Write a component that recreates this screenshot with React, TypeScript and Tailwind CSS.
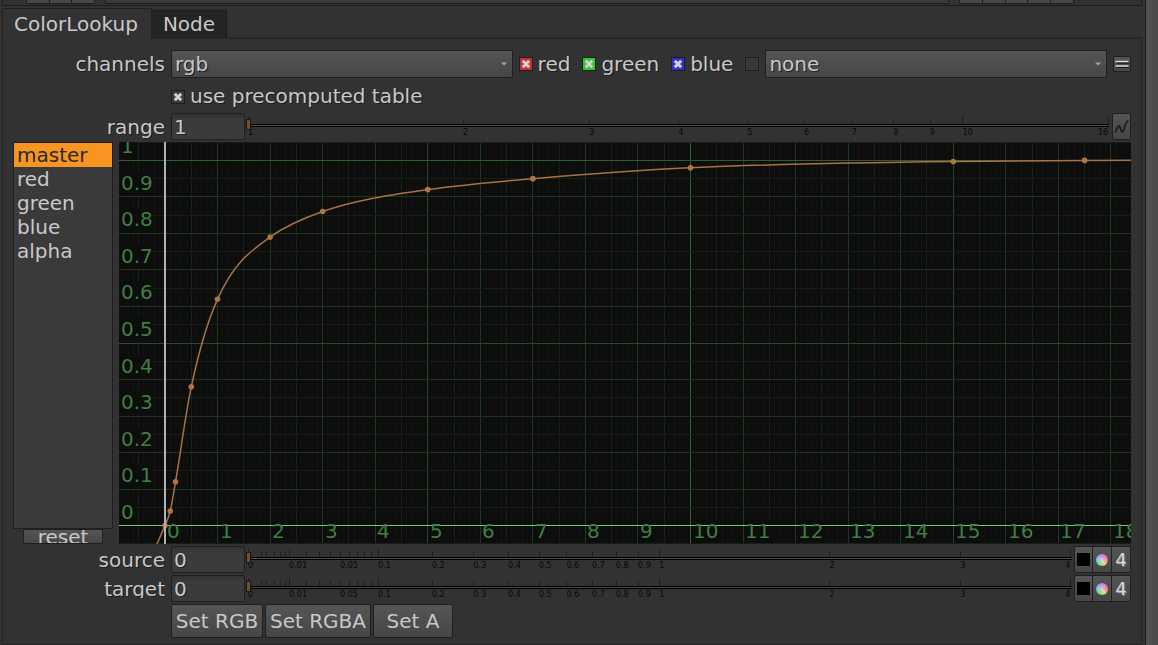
import { useState } from "react";
import type { ReactNode } from "react";

type Tick = { value: number; label?: string; tall?: boolean };

const CURVES = ["master", "red", "green", "blue", "alpha"];

const RANGE_TICKS: Tick[] = [
  { value: 1, label: "1", tall: true },
  { value: 2, label: "2" },
  { value: 3, label: "3" },
  { value: 4, label: "4" },
  { value: 5, label: "5" },
  { value: 6, label: "6" },
  { value: 7, label: "7" },
  { value: 8, label: "8" },
  { value: 9, label: "9" },
  { value: 10, label: "10", tall: true },
  { value: 16, label: "16", tall: true },
];

const COLOR_TICKS: Tick[] = [
  { value: 0, label: "0", tall: true },
  { value: 0.001 },
  { value: 0.002 },
  { value: 0.004 },
  { value: 0.006 },
  { value: 0.008 },
  { value: 0.01, label: "0.01", tall: true },
  { value: 0.02 },
  { value: 0.03 },
  { value: 0.04 },
  { value: 0.05, label: "0.05" },
  { value: 0.06 },
  { value: 0.07 },
  { value: 0.08 },
  { value: 0.09 },
  { value: 0.1, label: "0.1", tall: true },
  { value: 0.2, label: "0.2" },
  { value: 0.3, label: "0.3" },
  { value: 0.4, label: "0.4" },
  { value: 0.5, label: "0.5" },
  { value: 0.6, label: "0.6" },
  { value: 0.7, label: "0.7" },
  { value: 0.8, label: "0.8" },
  { value: 0.9, label: "0.9" },
  { value: 1, label: "1", tall: true },
  { value: 2, label: "2" },
  { value: 3, label: "3" },
  { value: 4, label: "4", tall: true },
];

const logScale = (v: number) => Math.log(v) / Math.log(16);
const sqrtScale = (v: number) => Math.sqrt(v / 4);

// x, y and tangent slope of every key on the master curve
const KEYS = [
  [0, 0, 0.33],
  [0.1, 0.04, 0.6],
  [0.2, 0.12, 0.83],
  [0.5, 0.38, 0.67],
  [1, 0.62, 0.32],
  [2, 0.79, 0.105],
  [3, 0.86, 0.05],
  [5, 0.92, 0.021],
  [7, 0.95, 0.0125],
  [10, 0.98, 0.0065],
  [15, 0.997, 0.0018],
  [17.5, 1, 0.0005],
];

// Graph space to pixels
const px = (x: number) => 46 + x * 52.55;
const py = (y: number) => 383.6 - y * 365.2;

function curvePath() {
  let d = `M${px(-0.2)} ${py(-0.066)} L${px(0)} ${py(0)}`;
  for (let i = 0; i < KEYS.length - 1; i++) {
    const [x0, y0, s0] = KEYS[i];
    const [x1, y1, s1] = KEYS[i + 1];
    const h = (x1 - x0) / 3;
    d += ` C${px(x0 + h)} ${py(y0 + s0 * h)} ${px(x1 - h)} ${py(y1 - s1 * h)} ${px(x1)} ${py(y1)}`;
  }
  return d + ` L${px(40)} ${py(1.004)}`;
}

function CurveEditor() {
  const cols = Array.from({ length: 420 }, (_, i) => i - 9);
  const rows = Array.from({ length: 23 }, (_, i) => i - 1);
  const yLabels = Array.from({ length: 11 }, (_, i) => i);
  const xLabels = Array.from({ length: 40 }, (_, i) => i);

  return (
    <svg className="block h-[402px] w-full min-w-0 bg-[#0d0d0d]" role="img" aria-label="curve">
      <g shapeRendering="crispEdges">
        {cols.map((i) => (
          <rect
            key={i}
            x={Math.floor(px(i / 10))}
            y={0}
            width={1}
            height={402}
            fill={
              i % 100 === 0
                ? "#2e6332"
                : i % 50 === 0
                  ? "#234727"
                  : i % 10 === 0
                    ? "#1d381f"
                    : i % 5 === 0
                      ? "#152317"
                      : "#0f120f"
            }
          />
        ))}
        {rows.map((i) => (
          <rect
            key={i}
            x={0}
            y={Math.floor(py(i / 20))}
            width="100%"
            height={1}
            fill={
              i % 20 === 0
                ? "#2d5c30"
                : i % 10 === 0
                  ? "#264d2a"
                  : i % 2 === 0
                    ? "#1d351f"
                    : "#141f15"
            }
          />
        ))}
      </g>

      {/* Labels knock out the fine grid behind them */}
      <g fontSize={20} fill="#3f7f40">
        {yLabels.map((i) => {
          const y = Math.round(py(i / 10));
          const text = i === 0 ? "0" : i === 10 ? "1" : `0.${i}`;
          return (
            <g key={i}>
              <rect x={1} y={y - 25} width={text.length > 1 ? 33 : 14} height={23} fill="#0d0d0d" />
              <text x={2} y={y - 7}>
                {text}
              </text>
            </g>
          );
        })}
        {xLabels.map((i) => (
          <rect
            key={i}
            x={px(i) + 2}
            y={377}
            width={i > 9 ? 26 : 13}
            height={24}
            fill="#0d0d0d"
          />
        ))}
        <rect
          x={0}
          y={383}
          width="100%"
          height={1}
          fill="#76c878"
          shapeRendering="crispEdges"
        />
        {xLabels.map((i) => (
          <text key={i} x={Math.round(px(i) + 2)} y={396}>
            {i}
          </text>
        ))}
      </g>

      <path d={curvePath()} fill="none" stroke="#a87344" strokeWidth={1.5} />
      {KEYS.map(([x, y]) => (
        <circle key={x} cx={px(x)} cy={py(y)} r={2.8} fill="#ae7543" />
      ))}
      <rect x={45} y={0} width={2} height={402} fill="#b2b2b2" />
    </svg>
  );
}

interface TickSliderProps {
  label: string;
  min: number;
  max: number;
  ticks: Tick[];
  scale: (v: number) => number;
}

function TickSlider({ label, min, max, ticks, scale }: TickSliderProps) {
  return (
    <div className="ml-px mr-0.5 grid h-[27px] min-w-0 flex-1 text-shadow-none">
      <div className="col-start-1 row-start-1 pl-0.5">
        <svg
          className="block h-[27px] w-full overflow-visible font-['DejaVu_Sans_Condensed','DejaVu_Sans',sans-serif] text-[9px]"
          aria-hidden="true"
        >
          <g shapeRendering="crispEdges">
            {ticks.map((t) => (
              <rect
                key={t.value}
                x={`${scale(t.value) * 99.8}%`}
                y={t.tall ? 3 : 6}
                width={1}
                height={t.tall ? 8 : 5}
                fill="#1e1e1e"
              />
            ))}
            <rect x={2} y={11} width="99.7%" height={1} fill="#000" />
            <rect x={2} y={12} width="99.7%" height={1} fill="#4b4b4b" />
            <rect x={2} y={13} width="99.7%" height={1} fill="#000" />
          </g>
          {ticks.map((t) =>
            t.label ? (
              <text
                key={t.value}
                x={`${scale(t.value) * 99.8}%`}
                y={22}
                fill="#080808"
                textAnchor={t.value === max ? "end" : "start"}
              >
                {t.label}
              </text>
            ) : null
          )}
        </svg>
      </div>
      <input
        type="range"
        aria-label={label}
        min={min}
        max={max}
        step="any"
        defaultValue={min}
        className="z-10 col-start-1 row-start-1 h-[23px] w-full appearance-none bg-transparent [&::-webkit-slider-thumb]:h-[11px] [&::-webkit-slider-thumb]:w-[5px] [&::-webkit-slider-thumb]:appearance-none [&::-webkit-slider-thumb]:border [&::-webkit-slider-thumb]:border-[#161616] [&::-webkit-slider-thumb]:bg-[#6a5424]"
      />
    </div>
  );
}

const RAISED = "border border-[#1f1f1f] bg-linear-to-b from-[#555555] to-[#464646]";

function Combo({ label, id, value }: { label: string; id: string; value: string }) {
  return (
    <div className="grid min-w-0 flex-1 items-center">
      <select
        id={id}
        aria-label={label}
        className={`col-start-1 row-start-1 h-7 w-full appearance-none rounded-xs pl-[3px] text-shadow-[1px_1px_0_#222] ${RAISED}`}
      >
        <option>{value}</option>
      </select>
      <svg
        className="pointer-events-none col-start-1 row-start-1 mr-1.5 h-1 w-1.5 justify-self-end"
        viewBox="0 0 6 4"
      >
        <path d="M0 0.5h6L3 3.5z" fill="#a5a5a5" />
      </svg>
    </div>
  );
}

function Check({
  label,
  color,
  checked,
  children,
}: {
  label: string;
  color: string;
  checked?: boolean;
  children?: ReactNode;
}) {
  return (
    <label className="flex items-center gap-[5px]">
      <span className="grid">
        <input
          type="checkbox"
          aria-label={label}
          defaultChecked={checked}
          className={`peer col-start-1 row-start-1 size-3.5 appearance-none border border-[#1d1d1d] ${color}`}
        />
        <svg
          className="pointer-events-none invisible col-start-1 row-start-1 size-3.5 peer-checked:visible"
          viewBox="0 0 14 14"
        >
          <path d="M3.8 3.8l6.4 6.4M10.2 3.8l-6.4 6.4" stroke="#d2d2d2" strokeWidth="3" />
        </svg>
      </span>
      {children}
    </label>
  );
}

function NumberField({ id, value }: { id: string; value: string }) {
  return (
    <input
      id={id}
      type="text"
      defaultValue={value}
      className="h-[27px] w-[74px] rounded-xs border border-[#1f1f1f] bg-linear-to-b from-[#313131] to-[#3b3b3b] to-25% px-0.5 pt-px text-shadow-[1px_1px_0_#222]"
    />
  );
}

function ColorRow({ name }: { name: string }) {
  return (
    <div className="mt-0.5 flex h-[27px]">
      <label
        htmlFor={name}
        className="mr-1.5 h-[23px] w-[162px] shrink-0 overflow-hidden text-right leading-[29px]"
      >
        {name}
      </label>
      <NumberField id={name} value="0" />
      <TickSlider label={`${name} slider`} min={0} max={4} ticks={COLOR_TICKS} scale={sqrtScale} />
      <div className={`flex w-[57px] divide-x divide-[#1f1f1f] rounded-xs ${RAISED}`}>
        <button aria-label="color swatch" className="grid w-[18px] place-items-center">
          <span className="size-[13px] bg-black" />
        </button>
        <button aria-label="color wheel" className="grid w-[19px] place-items-center">
          <span className="size-3 rounded-full bg-[radial-gradient(#e0e0e0cc,#ffffff22_70%),conic-gradient(#d850e0,#f06070_90deg,#e0d850_150deg,#60d060_210deg,#48c8d8_270deg,#8080f0_320deg,#d850e0)]" />
        </button>
        <button className="flex-1 text-[18px] leading-none text-[#d8d8d8] text-shadow-[1px_1px_0_#808080]">
          4
        </button>
      </div>
    </div>
  );
}

export default function App() {
  const [curve, setCurve] = useState("master");
  const [tab, setTab] = useState("ColorLookup");

  return (
    <div className="flex min-h-screen bg-[#323232] font-['DejaVu_Sans',sans-serif] text-[20px] leading-[27px] text-[#c8c8c8] text-shadow-[1px_1px_0_#1c1c1c]">
      <main className="mr-[3px] ml-0.5 flex min-w-0 flex-1 flex-col">
        {/* Lower edge of the node header */}
        <div className="flex h-1.5 border-x border-b border-[#1c1c1c] pr-[67px] pl-[23px]">
          <div className="flex h-1 w-[69px] divide-x divide-[#1c1c1c] rounded-b-xs border-x border-b border-[#1c1c1c] bg-[#484848]">
            <span className="flex-1" />
            <span className="flex-1" />
            <span className="flex-1" />
          </div>
          <div className="mx-2.5 h-1 flex-1 rounded-b-xs border-x border-b border-[#1c1c1c] bg-[#3a3a3a]" />
          <div className="flex h-1 w-[115px] divide-x divide-[#1c1c1c] rounded-b-xs border-x border-b border-[#1c1c1c] bg-[#484848]">
            <span className="flex-1" />
            <span className="flex-1" />
            <span className="flex-1" />
            <span className="flex-1" />
            <span className="flex-1" />
          </div>
        </div>

        <div className="flex h-[33px] items-end" role="tablist">
          <button
            role="tab"
            aria-selected={tab === "ColorLookup"}
            onClick={() => setTab("ColorLookup")}
            className="h-[31px] w-[150px] rounded-t-xs border-x border-t border-[#1f1f1f] pr-0.5"
          >
            ColorLookup
          </button>
          <button
            role="tab"
            aria-selected={tab === "Node"}
            onClick={() => setTab("Node")}
            className="h-[29px] w-[75px] rounded-tr-xs border-t border-r border-b-2 border-[#1c1c1c] border-b-[#262626] bg-[#242424]"
          >
            Node
          </button>
          <div className="h-0.5 flex-1 bg-[#262626]" />
        </div>

        <section className="flex flex-1 flex-col border-x border-b border-[#262626] pt-[11px] pr-2.5 pb-1.5">
          <div className="flex h-7 items-center">
            <label htmlFor="channels" className="mr-1.5 w-[162px] shrink-0 text-right">
              channels
            </label>
            <Combo id="channels" label="channels" value="rgb" />
            <div className="mx-1.5 flex gap-3">
              <Check label="red" color="bg-[#c83232]" checked>
                red
              </Check>
              <Check label="green" color="bg-[#32c832]" checked>
                green
              </Check>
              <Check label="blue" color="bg-[#3232c8]" checked>
                blue
              </Check>
              <Check label="extra channel" color="bg-[#383838]" />
            </div>
            <Combo id="extra" label="extra channel name" value="none" />
            <button
              aria-label="expression"
              className={`ml-1.5 grid h-4 w-[18px] place-items-center rounded-xs ${RAISED}`}
            >
              <svg className="h-2 w-3.5" viewBox="0 0 14 8">
                <path d="M1.5 3h12.5M1.5 7.5h12.5" stroke="#1c1c1c" strokeWidth="1.5" />
                <path d="M0.5 1.5h13M0.5 6h13" stroke="#dcdcdc" strokeWidth="1.5" />
              </svg>
            </button>
          </div>

          <div className="mt-[5px] ml-[168px] flex h-[27px] items-center">
            <Check label="use precomputed table" color="bg-[#3a3a3a]" checked>
              use precomputed table
            </Check>
          </div>

          <div className="mt-[3px] flex h-[27px]">
            <label htmlFor="range" className="mr-1.5 w-[162px] shrink-0 text-right leading-[29px]">
              range
            </label>
            <NumberField id="range" value="1" />
            <TickSlider label="range slider" min={1} max={16} ticks={RANGE_TICKS} scale={logScale} />
            <button aria-label="animation" className={`w-[19px] rounded-xs ${RAISED}`}>
              <svg className="block h-[25px] w-[17px]" viewBox="1 1 17 25">
                <path
                  d="M3.3 19.7C4.5 17 5.4 13 7 13s1.6 6 3.5 6S12.6 9 16.5 7.5"
                  fill="none"
                  stroke="#1c1c1c"
                  strokeWidth="1.8"
                />
              </svg>
            </button>
          </div>

          <div className="mt-0.5 flex pl-2.5">
            <div className="mr-1.5 flex h-[402px] w-[100px] shrink-0 flex-col items-center">
              <div
                role="listbox"
                aria-label="curves"
                className="w-full flex-1 border border-[#1f1f1f] bg-[#3a3a3a] text-shadow-none"
              >
                {CURVES.map((name) => (
                  <button
                    key={name}
                    role="option"
                    aria-selected={curve === name}
                    onClick={() => setCurve(name)}
                    className={`block h-6 w-full pl-[3px] text-left leading-6 ${
                      curve === name ? "bg-[#f89521] text-[#2a2a2a]" : ""
                    }`}
                  >
                    {name}
                  </button>
                ))}
              </div>
              <button
                className={`h-[15px] w-20 overflow-hidden rounded-xs leading-[15px] ${RAISED}`}
              >
                reset
              </button>
            </div>
            <div className="min-w-0 flex-1 text-shadow-none">
              <CurveEditor />
            </div>
          </div>

          <ColorRow name="source" />
          <ColorRow name="target" />

          <div className="mt-0.5 ml-[168px] flex h-[34px] gap-0.5">
            <button className={`w-[92px] rounded-xs ${RAISED}`}>Set RGB</button>
            <button className={`w-[106px] rounded-xs ${RAISED}`}>Set RGBA</button>
            <button className={`w-20 rounded-xs ${RAISED}`}>Set A</button>
          </div>
        </section>
      </main>

      <div className="w-[13px] shrink-0 border-l border-[#1c1c1c] bg-linear-to-r from-[#535353] to-[#484848]" />
    </div>
  );
}
